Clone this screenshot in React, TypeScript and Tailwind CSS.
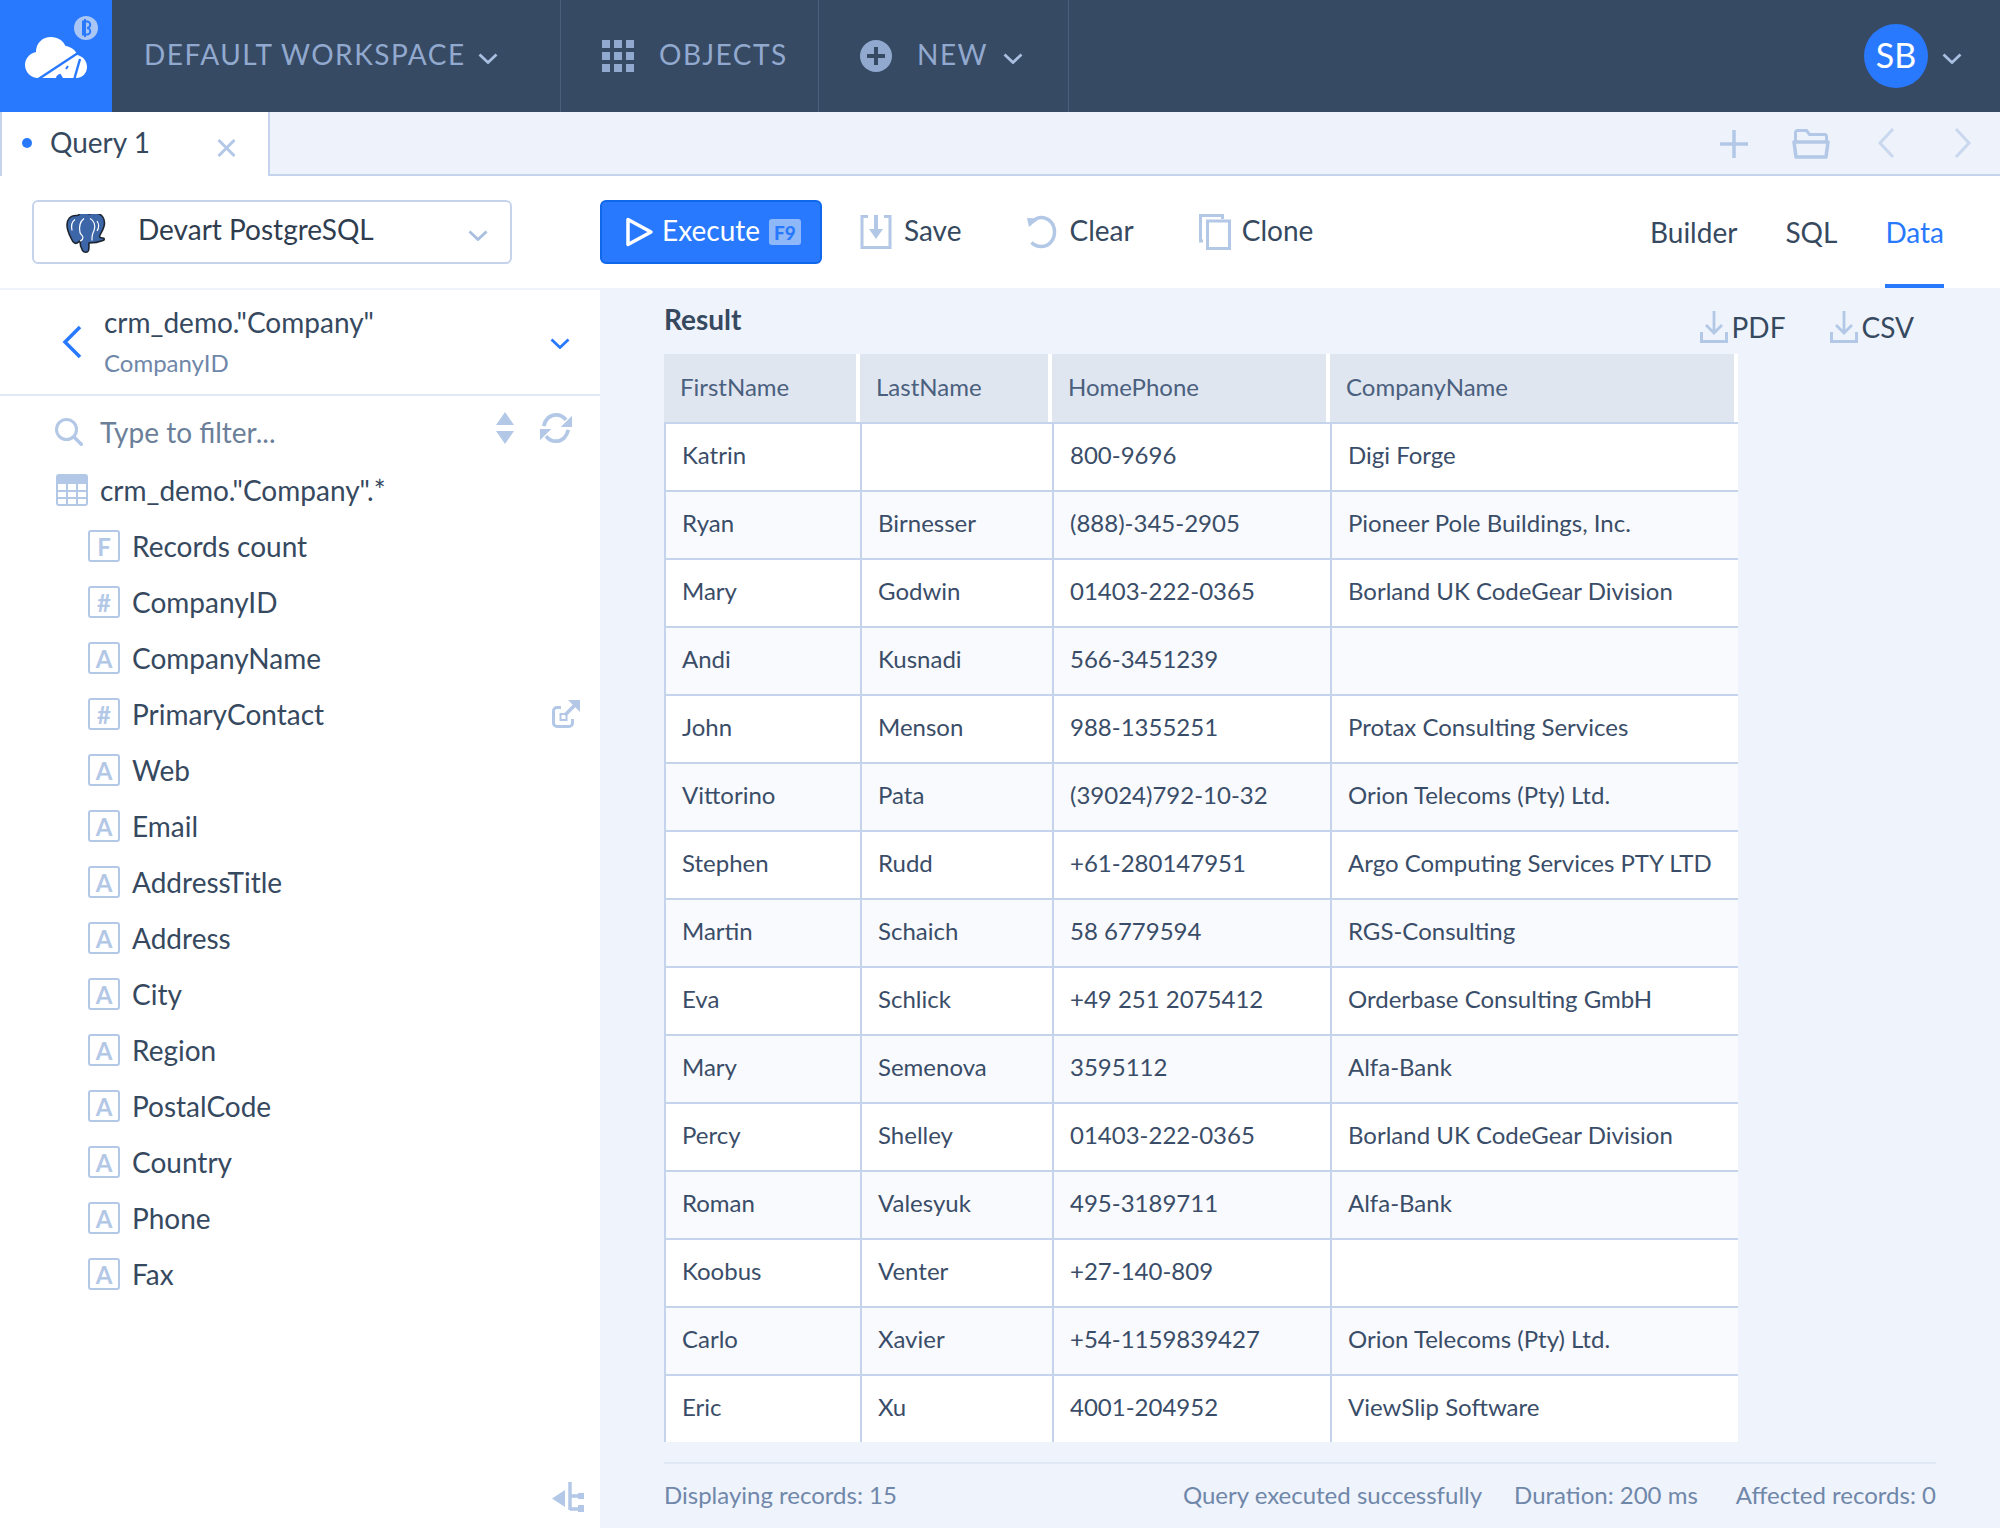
import React from "react";

const rows = [
  ["Katrin", "", "800-9696", "Digi Forge"],
  ["Ryan", "Birnesser", "(888)-345-2905", "Pioneer Pole Buildings, Inc."],
  ["Mary", "Godwin", "01403-222-0365", "Borland UK CodeGear Division"],
  ["Andi", "Kusnadi", "566-3451239", ""],
  ["John", "Menson", "988-1355251", "Protax Consulting Services"],
  ["Vittorino", "Pata", "(39024)792-10-32", "Orion Telecoms (Pty) Ltd."],
  ["Stephen", "Rudd", "+61-280147951", "Argo Computing Services PTY LTD"],
  ["Martin", "Schaich", "58 6779594", "RGS-Consulting"],
  ["Eva", "Schlick", "+49 251 2075412", "Orderbase Consulting GmbH"],
  ["Mary", "Semenova", "3595112", "Alfa-Bank"],
  ["Percy", "Shelley", "01403-222-0365", "Borland UK CodeGear Division"],
  ["Roman", "Valesyuk", "495-3189711", "Alfa-Bank"],
  ["Koobus", "Venter", "+27-140-809", ""],
  ["Carlo", "Xavier", "+54-1159839427", "Orion Telecoms (Pty) Ltd."],
  ["Eric", "Xu", "4001-204952", "ViewSlip Software"],
];

const fields: [string, string][] = [
  ["F", "Records count"],
  ["#", "CompanyID"],
  ["A", "CompanyName"],
  ["#", "PrimaryContact"],
  ["A", "Web"],
  ["A", "Email"],
  ["A", "AddressTitle"],
  ["A", "Address"],
  ["A", "City"],
  ["A", "Region"],
  ["A", "PostalCode"],
  ["A", "Country"],
  ["A", "Phone"],
  ["A", "Fax"],
];

const L = "#b3c8e6";

function Chevron({ color = "#a9bfe0" }: { color?: string }) {
  return (
    <svg width="20" height="11" viewBox="0 0 20 11" fill="none">
      <path d="M1.500 1.500 10 9.500l8.500-8" stroke={color} strokeWidth="2.800" />
    </svg>
  );
}

function Logo() {
  return (
    <svg width="112" height="112" viewBox="0 0 112 112">
      <circle cx="86" cy="28" r="12" fill="#a9c6f5" />
      <path d="M83 21.500h4a3.200 3.200 0 0 1 0 6.500a3.200 3.200 0 0 1 0 6.500h-4zM85 19v18" stroke="#2979ff" strokeWidth="2" fill="none" />
      <path d="M38 78c-7 0-13-6-13-13 0-6.500 4.500-11.500 11-13 0-9 6.500-15 15-15 7 0 12 3.500 14.500 9 5 .5 10 4 12 9 5.500 1.500 9.500 6 9.500 12 0 6.500-5 11-11 11z" fill="#fff" />
      <path d="M37 80 78 53" stroke="#2979ff" strokeWidth="2.400" />
      <path d="M80 59 74 80" stroke="#2979ff" strokeWidth="2.400" />
      <path d="M68 66l-2 3M60 75a4 4 0 0 0-3 5h6z" stroke="#2979ff" strokeWidth="2" fill="#2979ff" />
    </svg>
  );
}

function Elephant() {
  return (
    <svg width="40" height="40" viewBox="0 0 40 40">
      <path d="M10 1.500C4 1.500 1 5.500 1 11c0 6 3 11 5 15 1.500 3 3 4 5 3l3-2c0 3 .5 6.500 2.500 9.500 1.500 2 5 2.500 6 0 .5-2 .5-5 .5-7.500 4 0 9-.5 14-2.500 2-1 1.500-2.500-.5-2.500-2.500 0-3.500-1-2.500-3 2-4 4.500-7 4.500-12 0-5-3-9-8-10-3-.5-5 0-7 1-3-1-7-1.500-10-.5C13 2 12 1.500 10 1.500z" fill="#3d66a8" stroke="#1c2530" strokeWidth="1.600" />
      <path d="M9 5.500c-3 2-4 6-3 11M18 4.500c-4 3-5 9-4 14 .5 2 3 3 3 5M24 4.500c4 2 6 7 4 12-1 2-2 4-2 7v3M31 7c2 3 2 7 0 10M14 27c2-1 3-1 3-4" stroke="#fff" strokeWidth="1.200" fill="none" />
    </svg>
  );
}

function FieldIcon({ c }: { c: string }) {
  return (
    <div className="flex h-[32px] w-[32px] shrink-0 items-center justify-center rounded-[3px] border-2 border-[#b3c8e6] pt-[2px] text-[24px] font-bold leading-none text-[#b3c8e6]">
      {c}
    </div>
  );
}

function DownloadIcon() {
  return (
    <svg width="28" height="32" viewBox="0 0 28 32" fill="none">
      <path d="M14 0v21M6 14l8 8 8-8" stroke={L} strokeWidth="2.800" />
      <path d="M1.500 21v9.500h25V21" stroke={L} strokeWidth="3" />
    </svg>
  );
}

export default function App() {
  return (
    <div className="flex h-[1528px] w-[2000px] flex-col overflow-hidden bg-white font-['Lato','Noto_Sans',sans-serif] text-[#36495f]">
      {/* top bar */}
      <header className="flex h-[112px] shrink-0 items-stretch bg-[#374a64] text-[28px] tracking-[1.500px] text-[#92a9cf]">
        <div className="h-[112px] w-[112px] shrink-0 bg-[#2979ff]">
          <Logo />
        </div>
        <div className="flex w-[449px] items-center border-r-[1px] border-[#4a5f7c] pl-[32px]">
          <span className="pb-[4px]">DEFAULT WORKSPACE</span>
          <span className="ml-[12px] mt-[4px]"><Chevron /></span>
        </div>
        <div className="flex w-[258px] items-center border-r-[1px] border-[#4a5f7c] pl-[41px]">
          <div className="grid h-[32px] w-[32px] grid-cols-3 gap-[4px]">
            {Array.from({ length: 9 }).map((_, i) => (
              <div key={i} className="bg-[#92a9cf]" />
            ))}
          </div>
          <span className="ml-[25px] pb-[4px]">OBJECTS</span>
        </div>
        <div className="flex w-[250px] items-center border-r-[1px] border-[#4a5f7c] pl-[41px]">
          <svg width="32" height="32" viewBox="0 0 32 32">
            <circle cx="16" cy="16" r="16" fill="#92a9cf" />
            <path d="M16 7v18M7 16h18" stroke="#374a64" strokeWidth="4" />
          </svg>
          <span className="ml-[25px] pb-[4px]">NEW</span>
          <span className="ml-[15px] mt-[4px]"><Chevron /></span>
        </div>
        <div className="ml-auto flex items-center pr-[38px]">
          <div className="flex h-[64px] w-[64px] items-center justify-center rounded-full bg-[#2979ff] pb-[3px] text-[34px] tracking-normal text-white">SB</div>
          <span className="ml-[14px] mt-[4px]"><Chevron /></span>
        </div>
      </header>

      {/* tab row */}
      <div className="flex h-[64px] shrink-0 items-stretch bg-[#eef2fa]">
        <div className="flex h-[64px] w-[270px] shrink-0 items-start border-x-2 border-[#c5d4ec] bg-white pl-[20px]">
          <span className="mt-[26px] h-[10px] w-[10px] rounded-full bg-[#2979ff]" />
          <span className="ml-[18px] mt-[13px] text-[28px] leading-[34px]">Query 1</span>
          <svg className="ml-[67px] mt-[27px]" width="19" height="18" viewBox="0 0 19 18">
            <path d="M1.500 1 17.500 17M17.500 1 1.500 17" stroke={L} strokeWidth="3" />
          </svg>
        </div>
        <div className="flex flex-1 items-center justify-end border-b-2 border-[#c5d4ec] pr-[28px]">
          <svg className="mt-[2px]" width="30" height="30" viewBox="0 0 30 30">
            <path d="M15 1v28M1 15h28" stroke={L} strokeWidth="3.500" />
          </svg>
          <svg className="ml-[43px] mt-[2px]" width="38" height="30" viewBox="0 0 38 30" fill="none">
            <path d="M3.500 13V3.500a2 2 0 0 1 2-2h9l3 4h15a2 2 0 0 1 2 2V13" stroke={L} strokeWidth="3" />
            <path d="M2 13h34l-2 15H4z" stroke={L} strokeWidth="3.500" strokeLinejoin="round" />
          </svg>
          <svg className="ml-[47px]" width="18" height="30" viewBox="0 0 18 30" fill="none">
            <path d="M16 1 3 15l13 14" stroke="#c9d8ee" strokeWidth="3" />
          </svg>
          <svg className="ml-[59px]" width="18" height="30" viewBox="0 0 18 30" fill="none">
            <path d="m2 1 13 14L2 29" stroke="#c9d8ee" strokeWidth="3" />
          </svg>
        </div>
      </div>

      {/* toolbar */}
      <div className="flex h-[112px] shrink-0 items-start bg-white">
        <div className="ml-[32px] mt-[24px] flex h-[64px] w-[480px] items-center rounded-[6px] border-2 border-[#c5d4ec] pl-[32px] pr-[22px]">
          <span className="mt-[3px]"><Elephant /></span>
          <span className="ml-[32px] pb-[6px] text-[28px] text-[#2f3d4f]">Devart PostgreSQL</span>
          <span className="ml-auto mt-[6px]"><Chevron /></span>
        </div>
        <div className="ml-[88px] mt-[24px] flex h-[64px] w-[222px] items-center rounded-[6px] border-2 border-[#0f68ec] bg-[#2979ff] pl-[24px] text-[28px] text-white">
          <svg width="28" height="30" viewBox="0 0 28 30" fill="none">
            <path d="M2 2.500 25 15 2 27.500z" stroke="#fff" strokeWidth="3.500" strokeLinejoin="round" />
          </svg>
          <span className="ml-[8px] pb-[5px]">Execute</span>
          <span className="ml-[9px] flex h-[26px] w-[32px] items-center justify-center rounded-[3px] bg-[#8fb8f8] text-[19px] font-black leading-none text-[#2979ff]">F9</span>
        </div>
        <div className="ml-[38px] mt-[24px] flex h-[64px] items-center text-[28px]">
          <svg width="32" height="34" viewBox="0 0 32 34" fill="none">
            <path d="M8 1.500H2v31h28v-31h-6" stroke={L} strokeWidth="3" />
            <path d="M16 0v18" stroke={L} strokeWidth="4" />
            <path d="M9 14h14l-7 10z" fill={L} />
          </svg>
          <span className="ml-[12px] pb-[5px]">Save</span>
        </div>
        <div className="ml-[64px] mt-[24px] flex h-[64px] items-center text-[28px]">
          <svg width="32" height="34" viewBox="0 0 32 34" fill="none">
            <path d="M9 5.500C11 3.500 13.500 2.500 16 2.500c7.500 0 13.500 6 13.500 14.500S23.500 31.500 16 31.500c-4 0-7-1.500-9.500-4" stroke={L} strokeWidth="3.500" />
            <path d="M2 3l12 .5L4 12z" fill={L} />
          </svg>
          <span className="ml-[12px] pb-[5px]">Clear</span>
        </div>
        <div className="ml-[65px] mt-[24px] flex h-[64px] items-center text-[28px]">
          <svg width="32" height="36" viewBox="0 0 32 36" fill="none">
            <path d="M4 27H1.500V1.500h22V5" stroke={L} strokeWidth="3" />
            <rect x="8.500" y="7" width="22" height="27.500" stroke={L} strokeWidth="3" />
          </svg>
          <span className="ml-[11px] pb-[5px]">Clone</span>
        </div>
        <div className="ml-auto flex h-[112px] items-stretch pr-[56px] text-[28px]">
          <div className="flex items-center">Builder</div>
          <div className="ml-[48px] flex items-center">SQL</div>
          <div className="relative ml-[48px] flex items-center text-[#2979ff]">
            Data
            <span className="absolute inset-x-0 bottom-0 h-[4px] bg-[#2979ff]" />
          </div>
        </div>
      </div>

      <div className="flex min-h-0 flex-1">
        {/* sidebar */}
        <aside className="relative w-[600px] shrink-0 border-t-2 border-[#eef2fa] bg-white">
          <div className="flex h-[106px] items-center border-b-2 border-[#e1e8f5] pl-[62px] pr-[30px]">
            <svg width="20" height="34" viewBox="0 0 20 34" fill="none">
              <path d="M18 2 3 17l15 15" stroke="#2979ff" strokeWidth="3.500" />
            </svg>
            <div className="ml-[22px]">
              <div className="text-[28px] leading-[40px]">crm_demo."Company"</div>
              <div className="pt-[1px] text-[24px] leading-[40px] text-[#6f87a9]">CompanyID</div>
            </div>
            <span className="ml-auto mt-[2px]"><Chevron color="#2979ff" /></span>
          </div>
          <div className="flex h-[72px] items-center pl-[55px] pr-[26px]">
            <svg className="mb-[1px]" width="28" height="28" viewBox="0 0 28 28" fill="none">
              <circle cx="11.500" cy="11.500" r="10" stroke={L} strokeWidth="3" />
              <path d="m18.500 18.500 9 9" stroke={L} strokeWidth="3.500" />
            </svg>
            <span className="ml-[17px] text-[28px] text-[#6b7f99]">Type to filter...</span>
            <svg className="mb-[8px] ml-auto" width="18" height="32" viewBox="0 0 18 32">
              <path d="M9 0l9 13H0zM9 32l9-13H0z" fill={L} />
            </svg>
            <svg className="mb-[8px] ml-[24px]" width="36" height="34" viewBox="0 0 36 36" fill="none">
              <path d="M5 16C6.500 9 11.500 4 18 4c4.500 0 8 2 10.500 5.500" stroke={L} strokeWidth="4" />
              <path d="M31 20c-1.500 7-6.500 12-13 12-4.500 0-8-2-10.500-5.500" stroke={L} strokeWidth="4" />
              <path d="M35 5v12H23zM1 31V19h12z" fill={L} />
            </svg>
          </div>
          <div className="mt-[2px] flex h-[40px] items-center pl-[56px]">
            <svg width="32" height="32" viewBox="0 0 32 32" fill="none">
              <rect x="1" y="1" width="30" height="30" rx="2" stroke={L} strokeWidth="2" />
              <path d="M1 3a2 2 0 0 1 2-2h26a2 2 0 0 1 2 2v7H1z" fill={L} />
              <path d="M1 17h30M1 24h30M11 10v21M21 10v21" stroke={L} strokeWidth="2" />
            </svg>
            <span className="ml-[12px] text-[28px]">crm_demo."Company".*</span>
          </div>
          <div className="mt-[16px] flex flex-col gap-[16px] pl-[88px]">
            {fields.map(([c, name]) => (
              <div key={name} className="relative flex h-[40px] items-center text-[28px]">
                <FieldIcon c={c} />
                <span className="ml-[12px]">{name}</span>
                {name === "PrimaryContact" && (
                  <svg className="absolute right-[20px] top-[6px]" width="28" height="28" viewBox="0 0 28 28" fill="none">
                    <path d="M9 7.500H5a3.500 3.500 0 0 0-3.500 3.500v12A3.500 3.500 0 0 0 5 26.500h12a3.500 3.500 0 0 0 3.500-3.500v-4" stroke={L} strokeWidth="3" />
                    <rect x="8.500" y="14" width="6" height="6" stroke={L} strokeWidth="2" />
                    <path d="M13 15 23 5" stroke={L} strokeWidth="3.500" />
                    <path d="M16 0h12v12z" fill={L} />
                  </svg>
                )}
              </div>
            ))}
          </div>
          <svg className="absolute bottom-[16px] right-[16px]" width="32" height="30" viewBox="0 0 32 30">
            <path d="M0 16.500 13 8v17z" fill={L} />
            <path d="M18 0v28M18 14h10M18 27h10" stroke={L} strokeWidth="3.500" fill="none" />
            <rect x="26" y="11" width="6" height="6" fill={L} />
            <rect x="26" y="23" width="6" height="7" fill={L} />
          </svg>
        </aside>

        {/* main */}
        <main className="flex min-w-0 flex-1 flex-col bg-[#eff3fc] pl-[64px] pr-[64px]">
          <div className="flex h-[66px] shrink-0 items-start">
            <span className="mt-[10px] text-[28px] font-bold">Result</span>
            <div className="ml-auto mt-[18px] flex items-center pr-[22px] text-[28px]">
              <DownloadIcon />
              <span className="ml-[4px]">PDF</span>
              <span className="ml-[44px]"><DownloadIcon /></span>
              <span className="ml-[4px]">CSV</span>
            </div>
          </div>
          <table className="w-[1074px] shrink-0 table-fixed border-separate border-spacing-0 text-[24px] text-[#3a4d68]">
            <colgroup>
              <col className="w-[196px]" />
              <col className="w-[192px]" />
              <col className="w-[278px]" />
              <col className="w-[408px]" />
            </colgroup>
            <thead>
              <tr className="text-left">
                {["FirstName", "LastName", "HomePhone", "CompanyName"].map((h) => (
                  <th key={h} className="h-[68px] border-r-[4px] border-white bg-[#e0e6f0] pb-[2px] pl-[16px] font-normal text-[#4a607e]">{h}</th>
                ))}
              </tr>
            </thead>
            <tbody>
              {rows.map((r, i) => (
                <tr key={i} className={i % 2 === 0 ? "bg-white" : "bg-[#f9fafd]"}>
                  {r.map((c, j) => (
                    <td key={j} className="h-[68px] border-l-2 border-t-2 border-[#c5d4ec] pb-[4px] pl-[16px]">{c}</td>
                  ))}
                </tr>
              ))}
            </tbody>
          </table>
          <div className="mt-[20px] flex h-[66px] shrink-0 items-center border-t-2 border-[#e1e8f5] pb-[2px] text-[24px] text-[#6f87a9]">
            <span>Displaying records: 15</span>
            <span className="ml-auto">Query executed successfully</span>
            <span className="ml-[32px]">Duration: 200 ms</span>
            <span className="ml-[38px]">Affected records: 0</span>
          </div>
        </main>
      </div>
    </div>
  );
}
